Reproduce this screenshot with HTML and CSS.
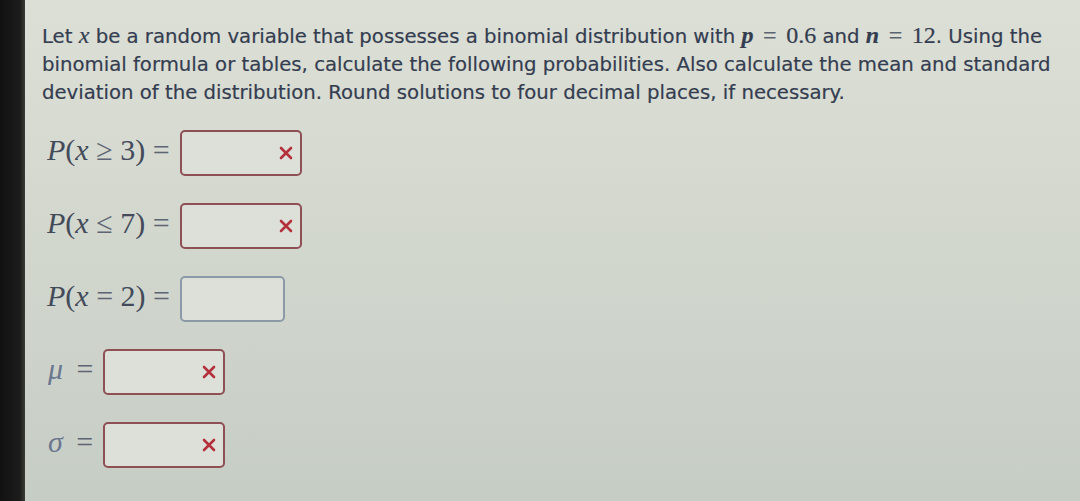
FILE: index.html
```html
<!DOCTYPE html>
<html>
<head>
<meta charset="utf-8">
<link rel="stylesheet" href="styles.css">
</head>
<body>
<div class="screen">
  <div class="bezel"></div>
  <div class="content">
    <p class="question">Let <span class="mv">x</span> be a random variable that possesses a binomial distribution with <span class="mv b">p</span><span class="mn rel">=</span><span class="mn">0.6</span> and <span class="mv b">n</span><span class="mn rel">=</span><span class="mn">12</span>. Using the binomial formula or tables, calculate the following probabilities. Also calculate the mean and standard deviation of the distribution. Round solutions to four decimal places, if necessary.</p>
    <div class="row r1">
      <span class="label"><i>P</i>(<i>x</i><span class="rel">≥</span>3)<span class="rel">=</span></span>
      <span class="box wrong"><svg class="xmark" viewBox="0 0 14 14"><path d="M2 2 L12 12 M12 2 L2 12"/></svg></span>
    </div>
    <div class="row r2">
      <span class="label"><i>P</i>(<i>x</i><span class="rel">≤</span>7)<span class="rel">=</span></span>
      <span class="box wrong"><svg class="xmark" viewBox="0 0 14 14"><path d="M2 2 L12 12 M12 2 L2 12"/></svg></span>
    </div>
    <div class="row r3">
      <span class="label"><i>P</i>(<i>x</i><span class="rel">=</span>2)<span class="rel">=</span></span>
      <span class="box blank short"></span>
    </div>
    <div class="row r4">
      <span class="label greek"><i>μ</i><span class="rel">=</span></span>
      <span class="box wrong"><svg class="xmark" viewBox="0 0 14 14"><path d="M2 2 L12 12 M12 2 L2 12"/></svg></span>
    </div>
    <div class="row r5">
      <span class="label greek"><i>σ</i><span class="rel">=</span></span>
      <span class="box wrong"><svg class="xmark" viewBox="0 0 14 14"><path d="M2 2 L12 12 M12 2 L2 12"/></svg></span>
    </div>
  </div>
</div>
</body>
</html>
```

FILE: styles.css
```css
html, body {
  margin: 0;
  padding: 0;
  width: 1080px;
  height: 501px;
  overflow: hidden;
}
.screen {
  display: flex;
  width: 1080px;
  height: 501px;
  background: linear-gradient(180deg, #dcdfd6 0%, #d2d7ce 50%, #c6cdc5 100%);
}
.bezel {
  width: 25px;
  flex: none;
  background: linear-gradient(90deg, #111 0%, #1c1c1c 80%, #3a3c38 100%);
}
.content {
  flex: 1;
  padding: 23px 0 0 17px;
}
.question {
  margin: 0;
  font-family: "DejaVu Sans", sans-serif;
  font-size: 19.7px;
  line-height: 28px;
  color: #343d50;
  width: 1030px;
  -webkit-text-stroke: 0.2px #343d50;
}
.mv {
  font-family: "Liberation Serif", serif;
  font-style: italic;
  font-size: 24px;
  line-height: 1;
}
.mv.b { font-weight: bold; }
.mn {
  font-family: "Liberation Serif", serif;
  font-size: 24px;
  line-height: 1;
}
.question .rel {
  margin: 0 0.4em;
  color: #5a6272;
}
.row {
  display: flex;
  align-items: center;
  height: 46px;
  margin-top: 27px;
}
.r1 { margin-top: 23px; }
.label {
  font-family: "Liberation Serif", serif;
  font-size: 30px;
  line-height: 1;
  color: #434a5a;
  padding-left: 5px;
  margin-right: 10px;
  white-space: nowrap;
  position: relative;
  top: -3px;
}
.label .rel {
  margin: 0 0.25em;
  color: #5d6474;
}
.label .rel:last-child { margin-right: 0; }
.label.greek {
  padding-left: 6px;
  color: #6b7790;
}
.label.greek .rel {
  margin-left: 0.45em;
}
.box {
  display: flex;
  align-items: center;
  justify-content: flex-end;
  box-sizing: border-box;
  width: 122px;
  height: 46px;
  border-radius: 5px;
  background: #dde0d9;
  padding-right: 7px;
}
.box.wrong { border: 2px solid #8e4f55; }
.box.blank { border: 2px solid #8c9aa8; }
.box.short { width: 105px; }
.xmark {
  width: 14px;
  height: 14px;
  fill: none;
  stroke: #b4303a;
  stroke-width: 2.6;
  stroke-linecap: round;
}
```
